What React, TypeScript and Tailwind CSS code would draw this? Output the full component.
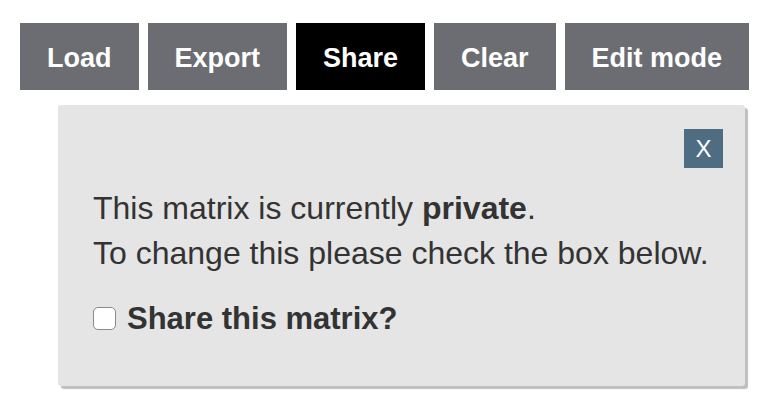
import { useState } from 'react';

const tabs = ['Load', 'Export', 'Share', 'Clear', 'Edit mode'];

function ShareBox() {
  const [shared, setShared] = useState(false);
  return (
    <div className="ml-[58px] mt-[15px] w-[687px] h-[281px] rounded-[3px] bg-[#e5e5e5] shadow-[3px_3px_1px_#bfbfbf] pl-[35px] pr-[22px] pt-[24px] text-[#333333]">
      <div className="flex justify-end">
        <button className="w-[39px] h-[39px] flex items-center justify-center bg-[#4e6c82] text-white text-[24px] leading-none">
          X
        </button>
      </div>
      <p className="mt-[18px] text-[32px] leading-[45px]">
        This matrix is currently <b className="font-bold">private</b>.
      </p>
      <p className="text-[32px] leading-[45px]">To change this please check the box below.</p>
      <label className="mt-[20px] flex items-center gap-[11px] text-[31px] leading-[45px] font-bold">
        <input
          type="checkbox"
          checked={shared}
          onChange={(e) => setShared(e.target.checked)}
          className="appearance-none w-[23px] h-[23px] rounded-[5px] border-[1.5px] border-[#8a8a8a] bg-white checked:bg-[#4e6c82]"
        />
        Share this matrix?
      </label>
    </div>
  );
}

export default function App() {
  return (
    <div className="w-[768px] h-[415px] bg-white font-['Liberation_Sans',Arial,sans-serif] pt-[23px]">
      <div className="flex gap-[9px] pl-[20px]">
        {tabs.map((t) => (
          <button
            key={t}
            className={`h-[67px] px-[27px] pt-[3px] text-[27px] font-bold text-white leading-none ${
              t === 'Share' ? 'bg-black' : 'bg-[#6c6d72]'
            }`}
          >
            {t}
          </button>
        ))}
      </div>
      <ShareBox />
    </div>
  );
}
